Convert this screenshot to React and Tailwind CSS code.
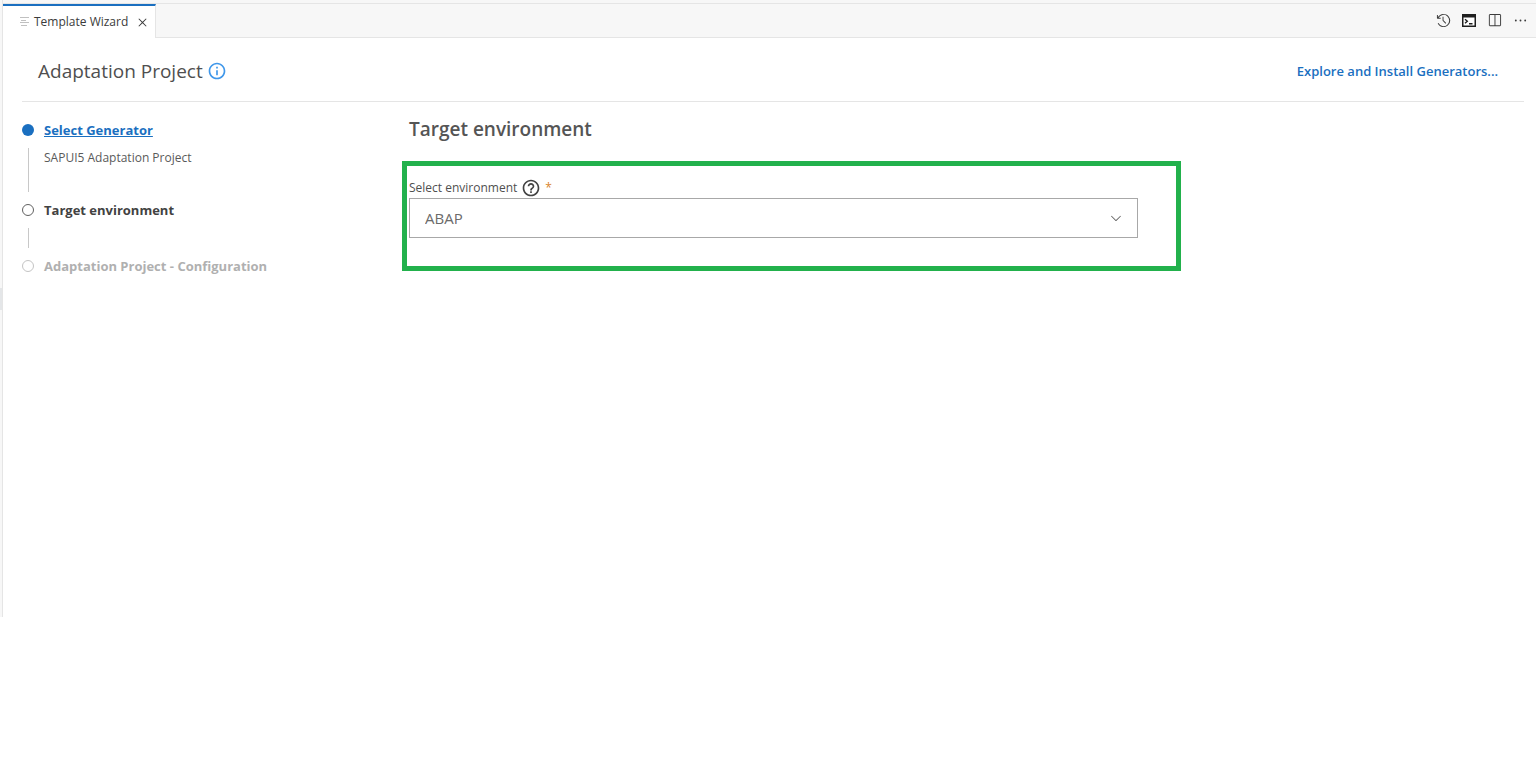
import React, { useState } from "react";
import { VscClose, VscHistory, VscSplitHorizontal, VscEllipsis, VscChevronDown } from "react-icons/vsc";
import { MdInfoOutline, MdHelpOutline } from "react-icons/md";

const TabIcon = () => (
  <svg width="10" height="10" viewBox="0 0 10 10" stroke="#c0c0c0" strokeWidth="1" aria-hidden="true">
    <path d="M0 .5h9M1 3.5h5M0 5.5h9M1 8.5h6" />
  </svg>
);

const TerminalIcon = () => (
  <svg width="14" height="13" viewBox="0 0 14 13" fill="none" aria-hidden="true">
    <rect x=".75" y=".75" width="12.5" height="11.5" fill="#fff" stroke="#1f1f1f" strokeWidth="1.5" />
    <path d="M0 0h14v3.5H0z" fill="#1f1f1f" />
    <path d="M3 5.2l2.3 2L3 9.2M7 9.7h3.5" stroke="#1f1f1f" strokeWidth="1.4" />
  </svg>
);

const TabBar = () => (
  <header className="flex h-[35px] items-stretch justify-between border-t border-[#e5e5e5] bg-[#f7f7f7]">
    <div className="flex items-center gap-1 border-t-2 border-r border-t-[#1a6fc0] border-r-[#e5e5e5] bg-white pr-[5px] pl-[17px]">
      <TabIcon />
      <span className="text-[12px] leading-4 text-[#3b3b3b]">Template Wizard</span>
      <button type="button" aria-label="Close tab" className="ml-[3px] text-[#3b3b3b]">
        <VscClose size={15} />
      </button>
    </div>
    <div className="flex flex-1 items-center justify-end gap-[11px] border-b border-[#e5e5e5] pr-2 text-[#3b3b3b]">
      <button type="button" aria-label="History"><VscHistory size={15} /></button>
      <button type="button" aria-label="Terminal"><TerminalIcon /></button>
      <button type="button" aria-label="Split editor"><VscSplitHorizontal size={15} /></button>
      <button type="button" aria-label="More actions"><VscEllipsis size={15} /></button>
    </div>
  </header>
);

const Steps = () => (
  <nav aria-label="Steps" className="w-[380px] shrink-0 pt-[18px] text-[13px] leading-5">
    <ol>
      <li className="flex gap-[10px]">
        <div className="flex w-3 flex-col items-center">
          <span className="mt-1 h-3 w-3 rounded-full bg-[#1a6fc0]" />
          <span className="mt-3 h-11 w-px bg-[#c8c8c8]" />
        </div>
        <div>
          <a href="#generator" className="font-bold text-[#1a6fc0] underline">Select Generator</a>
          <p className="mt-2 text-[12px] text-[#5a5a5a]">SAPUI5 Adaptation Project</p>
        </div>
      </li>
      <li className="mt-2 flex gap-[10px]">
        <div className="flex w-3 flex-col items-center">
          <span className="mt-1 h-3 w-3 rounded-full border border-[#616161]" />
          <span className="mt-3 h-5 w-px bg-[#c8c8c8]" />
        </div>
        <span className="font-bold text-[#424242]">Target environment</span>
      </li>
      <li className="mt-2 flex gap-[10px]">
        <span className="mt-1 h-3 w-3 rounded-full border border-[#c4c4c4]" />
        <span className="font-bold text-[#b0b0b0]">Adaptation Project - Configuration</span>
      </li>
    </ol>
  </nav>
);

const EnvironmentForm = () => {
  const [environment, setEnvironment] = useState("ABAP");

  return (
    <section className="min-w-0 flex-1 pt-[15px]">
      <h2 className="pl-[7px] text-[19px] leading-6 font-semibold text-[#555555]">Target environment</h2>
      <div className="mt-5 w-[69.4%] border-5 border-[#22b14c] pt-3 pr-[38px] pb-7 pl-[2px]">
        <div className="flex items-center gap-1 leading-5">
          <label htmlFor="environment" className="text-[12px] text-[#4f4f4f]">Select environment</label>
          <MdHelpOutline size={20} className="text-[#424242]" />
          <span className="text-[12px] text-[#d9822b]">*</span>
        </div>
        <div className="relative">
          <select
            id="environment"
            value={environment}
            onChange={(e) => setEnvironment(e.target.value)}
            className="block h-10 w-full appearance-none border border-[#a8a8a8] bg-white px-[15px] text-[15px] text-[#6b6b6b]"
          >
            <option value="ABAP">ABAP</option>
            <option value="Cloud Foundry">Cloud Foundry</option>
          </select>
          <VscChevronDown size={16} className="pointer-events-none absolute top-3 right-[14px] text-[#616161]" />
        </div>
      </div>
    </section>
  );
};

const App = () => {
  return (
    <div className="min-h-screen bg-white font-['Open_Sans','Noto_Sans',sans-serif]">
      <div className="flex min-h-[80vh]">
        <div className="flex w-[3px] shrink-0 flex-col border-r border-[#e5e5e5] bg-[#f7f7f7] pt-[288px]">
          <span className="h-[22px] bg-[#e4e6e8]" />
        </div>
        <div className="min-w-0 flex-1">
          <div className="h-[3px] bg-[#f7f7f7]" />
          <TabBar />
          <main className="pr-3 pl-[19px]">
            <div className="flex h-16 items-center justify-between border-b border-[#e5e5e5] pt-[2px] pr-[26px] pl-4">
              <div className="flex items-center gap-1">
                <h1 className="text-[19px] leading-6 text-[#4f4f4f]">Adaptation Project</h1>
                <MdInfoOutline size={20} className="text-[#3f97ea]" />
              </div>
              <a href="#generators" className="text-[13px] leading-5 font-semibold text-[#1a6fc0]">
                Explore and Install Generators...
              </a>
            </div>
            <div className="flex">
              <Steps />
              <EnvironmentForm />
            </div>
          </main>
        </div>
      </div>
    </div>
  );
};

export default App;
